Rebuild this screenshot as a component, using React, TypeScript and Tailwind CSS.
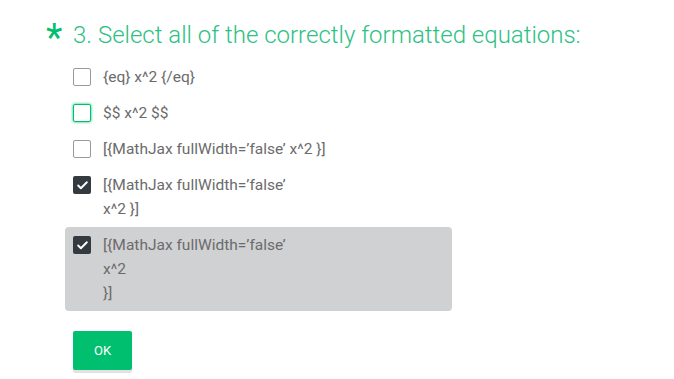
import { Check } from "lucide-react";

type Opt = { lines: string[]; checked?: boolean; focused?: boolean; hover?: boolean };

const OPTIONS: Opt[] = [
  { lines: ["{eq} x^2 {/eq}"] },
  { lines: ["$$ x^2 $$"], focused: true },
  { lines: ["[{MathJax fullWidth=’false’ x^2 }]"] },
  { lines: ["[{MathJax fullWidth=’false’", "x^2 }]"], checked: true },
  { lines: ["[{MathJax fullWidth=’false’", "x^2", "}]"], checked: true, hover: true },
];

export default function App() {
  return (
    <div className="w-[674px] h-[379px] bg-white overflow-hidden font-['Roboto',sans-serif]">
      <div className="pt-[20px] pl-[46px] flex items-start h-[59px]">
        <span className="text-[38px] leading-[38px] text-[#00bf6f] w-[27px] -mt-[1px]">*</span>
        <h1 className="text-[24px] leading-[30px] text-[#2dc183] font-light">
          3. Select all of the correctly formatted equations:
        </h1>
      </div>

      <div className="pl-[65px] flex flex-col w-[452px]">
        {OPTIONS.map((o, i) => (
          <div
            key={i}
            className={`flex items-start gap-[12px] pl-[8px] py-[6px] rounded ${o.hover ? "bg-[#d0d1d3]" : ""}`}
          >
            <Box checked={o.checked} focused={o.focused} />
            <div className="text-[15.5px] leading-[24px] text-[#6b6b6b]">
              {o.lines.map((l, j) => (
                <div key={j}>{l}</div>
              ))}
            </div>
          </div>
        ))}
      </div>

      <div className="pl-[73px] mt-[20px]">
        <button className="w-[59px] h-[39px] bg-[#00bf6f] rounded-[2px] text-white text-[13px] shadow-[0_3px_0_#e2e2e2]">
          OK
        </button>
      </div>
    </div>
  );
}

function Box({ checked, focused }: { checked?: boolean; focused?: boolean }) {
  if (checked)
    return (
      <span className="mt-[3px] w-[18px] h-[18px] shrink-0 rounded-[2px] bg-[#333a40] flex items-center justify-center">
        <Check size={13} strokeWidth={3.5} className="text-white" />
      </span>
    );
  return (
    <span
      className={`mt-[3px] w-[18px] h-[18px] shrink-0 rounded-[2px] border bg-white ${
        focused ? "border-[#00bf6f] shadow-[0_0_3px_#00bf6f]" : "border-[#9a9a9a]"
      }`}
    />
  );
}
